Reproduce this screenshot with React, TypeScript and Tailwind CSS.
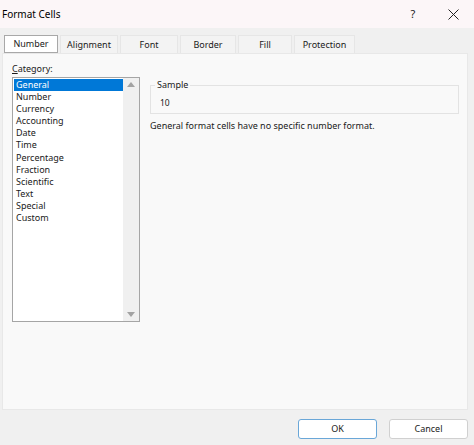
const tabs = ['Number', 'Alignment', 'Font', 'Border', 'Fill', 'Protection'];
const tabWidths = ['w-[54px]', 'w-[58px]', 'w-[58px]', 'w-[56px]', 'w-[54px]', 'w-[61px]'];

const categories = [
  'General',
  'Number',
  'Currency',
  'Accounting',
  'Date',
  'Time',
  'Percentage',
  'Fraction',
  'Scientific',
  'Text',
  'Special',
  'Custom',
];

export default function App() {
  return (
    <div
      className="w-[474px] h-[445px] flex flex-col bg-[#f0f0f0] text-[9px] text-[#1a1a1a] overflow-hidden"
      style={{ fontFamily: '"Noto Sans", "Open Sans", sans-serif' }}
    >
      {/* title bar */}
      <div className="h-[28px] flex items-center bg-[#fcf6f8] shrink-0">
        <span className="pl-[2px] text-[10px] text-black">Format Cells</span>
        <span className="ml-auto w-[40px] text-center text-[11px]">?</span>
        <span className="w-[41px] flex justify-center">
          <svg width="11" height="11" viewBox="0 0 11 11">
            <path d="M0.5 0.5 L10.5 10.5 M10.5 0.5 L0.5 10.5" stroke="#222" strokeWidth="1" />
          </svg>
        </span>
      </div>

      {/* tabs */}
      <div className="flex pl-[4px] gap-[2px] h-[25px] shrink-0 items-end">
        {tabs.map((t, i) => (
          <div
            key={t}
            className={
              i === 0
                ? `${tabWidths[i]} h-[18px] flex items-center justify-center bg-white border border-[#a8a8a8]`
                : `${tabWidths[i]} h-[18px] flex items-center justify-center bg-[#f3f3f3] border border-b-0 border-[#e6e6e6]`
            }
          >
            {t}
          </div>
        ))}
      </div>

      {/* panel */}
      <div className="ml-[2px] mr-[6px] h-[357px] bg-[#f9f9f9] border border-[#e8e8e8] flex pt-[8px] pl-[9px] shrink-0">
        <div className="flex flex-col">
          <div className="leading-[14px] h-[15px]">
            <span className="underline underline-offset-1">C</span>ategory:
          </div>
          <div className="w-[128px] h-[245px] bg-white border border-[#a5a5a5] flex">
            <div className="flex-1 pt-[1px] pl-[1px]">
              {categories.map((c, i) => (
                <div
                  key={c}
                  className={
                    i === 0
                      ? 'h-[12.1px] leading-[12px] pl-[2px] bg-[#0078d7] text-white'
                      : 'h-[12.1px] leading-[12px] pl-[2px]'
                  }
                >
                  {c}
                </div>
              ))}
            </div>
            <div className="w-[16px] bg-[#f0f0f0] flex flex-col items-center justify-between py-[4px]">
              <svg width="8" height="5" viewBox="0 0 8 5">
                <path d="M0 5 L4 0 L8 5 Z" fill="#a3a3a3" />
              </svg>
              <svg width="8" height="5" viewBox="0 0 8 5">
                <path d="M0 0 L8 0 L4 5 Z" fill="#a3a3a3" />
              </svg>
            </div>
          </div>
        </div>

        <div className="flex flex-col ml-[10px] pt-[23px]">
          <div className="relative w-[309px] h-[29px] border border-[#e3e3e3]">
            <span className="absolute -top-[8px] left-[4px] px-[2px] bg-[#f9f9f9] leading-[14px]">Sample</span>
            <span className="absolute top-[10px] left-[9px] leading-[14px] text-[8.5px]">10</span>
          </div>
          <div className="mt-[5px] leading-[14px]">General format cells have no specific number format.</div>
        </div>
      </div>

      {/* footer */}
      <div className="flex justify-end gap-[12px] pr-[6px] pt-[9px]">
        <button className="w-[79px] h-[20px] bg-white border border-[#6aa7d8] rounded-[3px] text-[9px]">OK</button>
        <button className="w-[79px] h-[20px] bg-white border border-[#d0d0d0] rounded-[3px] text-[9px]">Cancel</button>
      </div>
    </div>
  );
}
